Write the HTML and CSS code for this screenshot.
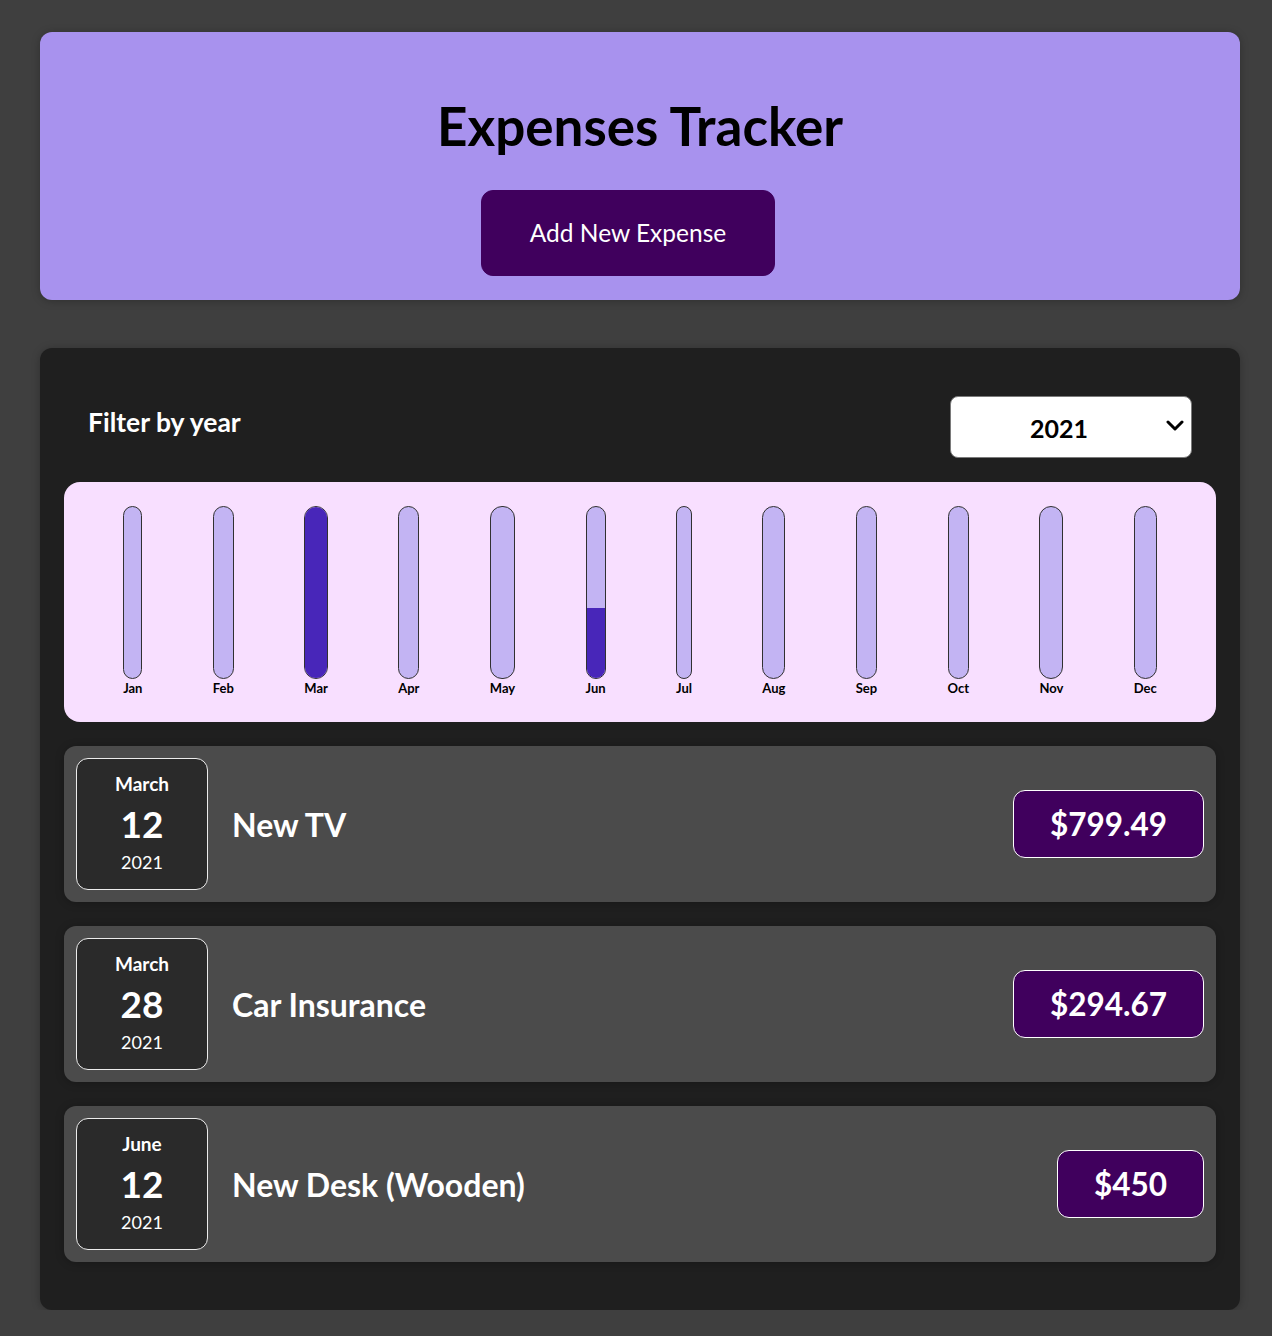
FILE: index.html
```html
<!DOCTYPE html>
<html lang="en">
<head>
<meta charset="utf-8">
<title>Expenses Tracker</title>
<link rel="stylesheet" href="styles.css">
</head>
<body>
<div class="new-expense">
  <h1 class="title">Expenses Tracker</h1>
  <button class="add-btn" type="button">Add New Expense</button>
</div>

<div class="expenses">
  <div class="filter">
    <label class="filter-label" for="year">Filter by year</label>
    <span class="select-wrap">
      <select id="year" class="filter-select">
        <option>2022</option>
        <option selected>2021</option>
        <option>2020</option>
        <option>2019</option>
      </select>
      <svg class="chevron" width="18" height="12" viewBox="0 0 18 12"><path d="M2 2 L9 9 L16 2" fill="none" stroke="#000" stroke-width="3" stroke-linecap="round" stroke-linejoin="round"/></svg>
    </span>
  </div>

  <div class="chart">
    <div class="bar"><div class="bar-inner"><div class="bar-fill" style="height:0%"></div></div><div class="bar-label">Jan</div></div>
    <div class="bar"><div class="bar-inner"><div class="bar-fill" style="height:0%"></div></div><div class="bar-label">Feb</div></div>
    <div class="bar"><div class="bar-inner"><div class="bar-fill" style="height:100%"></div></div><div class="bar-label">Mar</div></div>
    <div class="bar"><div class="bar-inner"><div class="bar-fill" style="height:0%"></div></div><div class="bar-label">Apr</div></div>
    <div class="bar"><div class="bar-inner"><div class="bar-fill" style="height:0%"></div></div><div class="bar-label">May</div></div>
    <div class="bar"><div class="bar-inner"><div class="bar-fill" style="height:41%"></div></div><div class="bar-label">Jun</div></div>
    <div class="bar"><div class="bar-inner"><div class="bar-fill" style="height:0%"></div></div><div class="bar-label">Jul</div></div>
    <div class="bar"><div class="bar-inner"><div class="bar-fill" style="height:0%"></div></div><div class="bar-label">Aug</div></div>
    <div class="bar"><div class="bar-inner"><div class="bar-fill" style="height:0%"></div></div><div class="bar-label">Sep</div></div>
    <div class="bar"><div class="bar-inner"><div class="bar-fill" style="height:0%"></div></div><div class="bar-label">Oct</div></div>
    <div class="bar"><div class="bar-inner"><div class="bar-fill" style="height:0%"></div></div><div class="bar-label">Nov</div></div>
    <div class="bar"><div class="bar-inner"><div class="bar-fill" style="height:0%"></div></div><div class="bar-label">Dec</div></div>
  </div>

  <div class="item">
    <div class="date">
      <div class="date-month">March</div>
      <div class="date-day">12</div>
      <div class="date-year">2021</div>
    </div>
    <h2 class="item-title">New TV</h2>
    <div class="price">$799.49</div>
  </div>

  <div class="item">
    <div class="date">
      <div class="date-month">March</div>
      <div class="date-day">28</div>
      <div class="date-year">2021</div>
    </div>
    <h2 class="item-title">Car Insurance</h2>
    <div class="price">$294.67</div>
  </div>

  <div class="item">
    <div class="date">
      <div class="date-month">June</div>
      <div class="date-day">12</div>
      <div class="date-year">2021</div>
    </div>
    <h2 class="item-title">New Desk (Wooden)</h2>
    <div class="price">$450</div>
  </div>
</div>
</body>
</html>
```

FILE: styles.css
```css
* {
  box-sizing: border-box;
}

html, body {
  margin: 0;
  padding: 0;
}

body {
  background: #3f3f3f;
  font-family: "Lato", "Noto Sans", sans-serif;
  overflow: hidden;
}

.new-expense {
  width: 1200px;
  margin: 32px 32px 48px 40px;
  padding: 24px;
  background: #a892ee;
  border-radius: 12px;
  text-align: center;
  box-shadow: 0 1px 8px rgba(0, 0, 0, 0.25);
}

.title {
  margin: 39px 0 34px;
  font-size: 53px;
  line-height: 61px;
  font-weight: 700;
  color: #000;
}

.add-btn {
  font-family: inherit;
  font-size: 24.5px;
  line-height: 36px;
  padding: 24px 48px;
  margin-right: 24px;
  border: 1px solid #40005d;
  background: #40005d;
  color: #fff;
  border-radius: 12px;
  cursor: pointer;
}

.expenses {
  width: 1200px;
  margin: 0 32px 0 40px;
  padding: 24px;
  background: #1f1f1f;
  border-radius: 12px;
  box-shadow: 0 1px 8px rgba(0, 0, 0, 0.25);
}

.filter {
  display: flex;
  align-items: center;
  justify-content: space-between;
  padding: 0 24px;
  margin: 24px 0;
  color: #fff;
}

.filter-label {
  font-weight: 700;
  font-size: 26.5px;
  margin-bottom: 10px;
}

.select-wrap {
  position: relative;
  display: block;
}

.filter-select {
  appearance: none;
  -webkit-appearance: none;
  display: block;
  width: 242px;
  height: 62px;
  padding: 2px 0 0 79px;
  font-family: inherit;
  font-size: 25px;
  font-weight: 700;
  color: #000;
  background: #fff;
  border: 1.5px solid #7a7a7a;
  border-radius: 8px;
}

.chevron {
  position: absolute;
  right: 8px;
  top: 24px;
  pointer-events: none;
}

.chart {
  height: 240px;
  padding: 24px;
  border-radius: 16px;
  background: #f8dfff;
  display: flex;
  justify-content: space-around;
}

.bar {
  height: 100%;
  display: flex;
  flex-direction: column;
  align-items: center;
}

.bar-inner {
  flex: 1;
  width: 100%;
  border: 1.5px solid #313131;
  border-radius: 12px;
  background: #c3b4f3;
  overflow: hidden;
  display: flex;
  flex-direction: column;
  justify-content: flex-end;
}

.bar-fill {
  width: 100%;
  background: #4826b9;
}

.bar-label {
  font-size: 13px;
  line-height: 19px;
  font-weight: 700;
  color: #000;
  text-align: center;
}

.item {
  display: flex;
  align-items: center;
  padding: 12px;
  margin: 24px 0;
  border-radius: 12px;
  background: #4b4b4b;
  box-shadow: 0 1px 8px rgba(0, 0, 0, 0.25);
}

.date {
  width: 132px;
  height: 132px;
  flex: none;
  display: flex;
  flex-direction: column;
  align-items: center;
  justify-content: center;
  border: 1.5px solid #ececec;
  border-radius: 12px;
  background: #2a2a2a;
  color: #fff;
}

.date-month {
  font-size: 19px;
  line-height: 24px;
  font-weight: 700;
  margin-top: -4px;
}

.date-day {
  font-size: 37px;
  line-height: 56px;
  font-weight: 700;
}

.date-year {
  font-size: 18px;
  line-height: 20px;
}

.item-title {
  flex: 1;
  margin: 0 24px;
  font-size: 32px;
  font-weight: 700;
  color: #fff;
}

.price {
  font-size: 31.5px;
  line-height: 42px;
  font-weight: 700;
  color: #fff;
  background: #40005d;
  border: 1.5px solid #fff;
  border-radius: 12px;
  padding: 12px 36px;
}
```
